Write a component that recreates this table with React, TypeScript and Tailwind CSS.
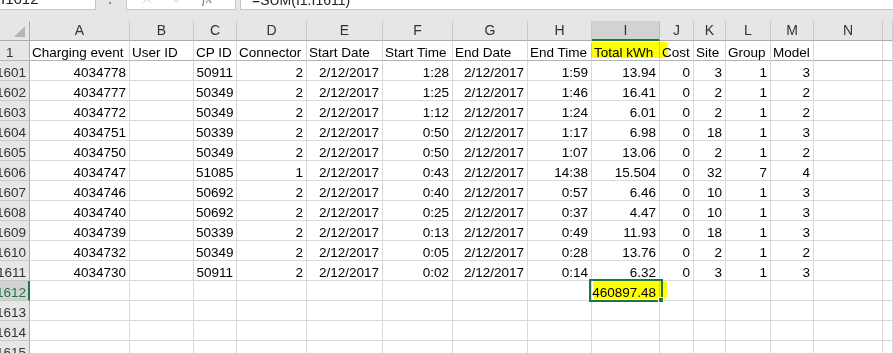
import React from "react";
import { X, Check } from "lucide-react";

const cols = ["A", "B", "C", "D", "E", "F", "G", "H", "I", "J", "K", "L", "M", "N", ""];

const headers = ["Charging event", "User ID", "CP ID", "Connector", "Start Date", "Start Time", "End Date", "End Time", "Total kWh", "Cost", "Site", "Group", "Model", "", ""];

const rows: [string, string, string, string, string, string, string, string, string, string][] = [
  ["1601", "4034778", "50911", "2", "1:28", "1:59", "13.94", "3", "1", "3"],
  ["1602", "4034777", "50349", "2", "1:25", "1:46", "16.41", "2", "1", "2"],
  ["1603", "4034772", "50349", "2", "1:12", "1:24", "6.01", "2", "1", "2"],
  ["1604", "4034751", "50339", "2", "0:50", "1:17", "6.98", "18", "1", "3"],
  ["1605", "4034750", "50349", "2", "0:50", "1:07", "13.06", "2", "1", "2"],
  ["1606", "4034747", "51085", "1", "0:43", "14:38", "15.504", "32", "7", "4"],
  ["1607", "4034746", "50692", "2", "0:40", "0:57", "6.46", "10", "1", "3"],
  ["1608", "4034740", "50692", "2", "0:25", "0:37", "4.47", "10", "1", "3"],
  ["1609", "4034739", "50339", "2", "0:13", "0:49", "11.93", "18", "1", "3"],
  ["1610", "4034732", "50349", "2", "0:05", "0:28", "13.76", "2", "1", "2"],
  ["1611", "4034730", "50911", "2", "0:02", "0:14", "6.32", "3", "1", "3"],
];

const grid =
  "grid grid-cols-[30px_100px_64px_43px_70px_76px_70px_75px_64px_68px_34px_32px_45px_43px_69px_1fr]";

function Cell({ children, right, last }: { children?: React.ReactNode; right?: boolean; last?: boolean }) {
  return (
    <div
      className={`h-5 overflow-hidden whitespace-nowrap border-b border-r border-[#d9d9d9] px-[2px] pt-[4px] leading-[15px] ${
        right ? "text-right pr-[3px]" : "text-left"
      } ${last ? "border-b-[#b4b4b4]" : ""}`}
    >
      {children}
    </div>
  );
}

function RowHead({ n, active }: { n: string; active?: boolean }) {
  return (
    <div
      className={`flex h-5 justify-end overflow-hidden whitespace-nowrap border-b border-[#c8c8c8] pt-[4px] leading-[15px] ${
        active
          ? "bg-[#d2d2d2] text-[#217346] border-r-2 border-r-[#217346] pr-[2px]"
          : "bg-[#e6e6e6] text-[#333] border-r border-r-[#ababab] pr-[3px]"
      }`}
    >
      <span className="shrink-0">{n}</span>
    </div>
  );
}

export default function App() {
  const blank = Array.from({ length: 15 });
  return (
    <div className="h-[353px] w-[893px] overflow-hidden bg-white text-[13.5px] text-black font-['Liberation_Sans',Arial,sans-serif]">
      {/* formula bar strip */}
      <div className="h-[21px] bg-[#e6e6e6]">
        <div className="flex h-[10px]">
          <div className="w-[96px] overflow-hidden border-b border-r border-[#c6c6c6] bg-white pl-[1px]">
            <div className="-mt-[8px] text-[15px] leading-[14px] text-[#222]">I1612</div>
          </div>
          <div className="relative w-[30px]">
            <div className="absolute left-[13px] top-[2px] h-[2px] w-[2px] bg-[#8a8a8a]" />
          </div>
          <div className="flex w-[110px] items-start gap-[17px] overflow-hidden border-b border-r border-l border-[#c6c6c6] bg-white pl-[13px]">
            <X className="-mt-[8px] h-[14px] w-[14px] shrink-0 text-[#bdbdbd]" strokeWidth={1.5} />
            <Check className="-mt-[8px] h-[14px] w-[14px] shrink-0 text-[#bdbdbd]" strokeWidth={1.5} />
            <span className="-mt-[8px] font-['Liberation_Serif',serif] text-[14px] italic leading-[14px] text-[#777]">fx</span>
          </div>
          <div className="w-[4px]" />
          <div className="flex-1 overflow-hidden border-b border-l border-[#c6c6c6] bg-white pl-[11px]">
            <div className="-mt-[7px] text-[14px] leading-[14px] text-[#222]">=SUM(I1:I1611)</div>
          </div>
        </div>
      </div>

      {/* column letters */}
      <div className={grid}>
        <div className="relative h-5 border-b border-r border-[#ababab] bg-[#e6e6e6]">
          <div className="absolute bottom-[3px] right-[4px] h-0 w-0 border-b-[11px] border-l-[11px] border-b-[#b5b5b5] border-l-transparent" />
        </div>
        {cols.map((c, i) =>
          c === "I" ? (
            <div key={i} className="h-5 border-r border-b-2 border-r-[#bdbdbd] border-b-[#217346] bg-[#d2d2d2] text-center text-[14px] leading-[19px] text-[#333]">
              {c}
            </div>
          ) : (
            <div key={i} className="h-5 border-b border-r border-b-[#ababab] border-r-[#c8c8c8] bg-[#e6e6e6] text-center text-[14px] leading-[19px] text-[#333]">
              {c}
            </div>
          )
        )}
      </div>

      {/* row 1 headers */}
      <div className={grid}>
        <div className="h-5 overflow-hidden border-b border-r border-b-[#b4b4b4] border-r-[#ababab] bg-[#e6e6e6] pl-[6px] pt-[4px] leading-[15px] text-[#333]">1</div>
        {headers.map((h, i) =>
          h === "Total kWh" ? (
            <div key={i} className="relative h-5 whitespace-nowrap border-b border-r border-[#d9d9d9] border-b-[#b4b4b4] px-[2px] pt-[4px] leading-[15px]">
              Total kWh
              <div className="absolute left-[-1px] top-[1px] z-10 h-[16px] w-[77px] rounded-[3px] bg-[#ffff00] mix-blend-multiply" />
            </div>
          ) : (
            <Cell key={i} last>
              {h}
            </Cell>
          )
        )}
      </div>

      {/* data */}
      {rows.map((r) => (
        <div key={r[0]} className={grid}>
          <RowHead n={r[0]} />
          <Cell right>{r[1]}</Cell>
          <Cell />
          <Cell right>{r[2]}</Cell>
          <Cell right>{r[3]}</Cell>
          <Cell right>2/12/2017</Cell>
          <Cell right>{r[4]}</Cell>
          <Cell right>2/12/2017</Cell>
          <Cell right>{r[5]}</Cell>
          <Cell right>{r[6]}</Cell>
          <Cell right>0</Cell>
          <Cell right>{r[7]}</Cell>
          <Cell right>{r[8]}</Cell>
          <Cell right>{r[9]}</Cell>
          <Cell />
          <Cell />
        </div>
      ))}

      {/* total row */}
      <div className={grid}>
        <RowHead n="1612" active />
        {blank.map((_, i) =>
          i === 8 ? (
            <div key={i} className="relative h-5 whitespace-nowrap border-b border-r border-[#d9d9d9] pr-[3px] pt-[4px] text-right leading-[15px]">
              460897.48
              <div className="absolute left-[1px] top-[0px] z-10 h-[18px] w-[74px] rounded-[3px] bg-[#ffff00] mix-blend-multiply" />
              <div className="absolute -left-[3px] -top-[2px] z-20 h-[23px] w-[74px] border-2 border-[#217346]" />
              <div className="absolute -right-[5px] -bottom-[3px] z-30 h-[6px] w-[6px] border border-white bg-[#217346]" />
            </div>
          ) : (
            <Cell key={i} />
          )
        )}
      </div>

      {["1613", "1614", "1615"].map((n) => (
        <div key={n} className={grid}>
          <RowHead n={n} />
          {blank.map((_, i) => (
            <Cell key={i} />
          ))}
        </div>
      ))}
    </div>
  );
}
